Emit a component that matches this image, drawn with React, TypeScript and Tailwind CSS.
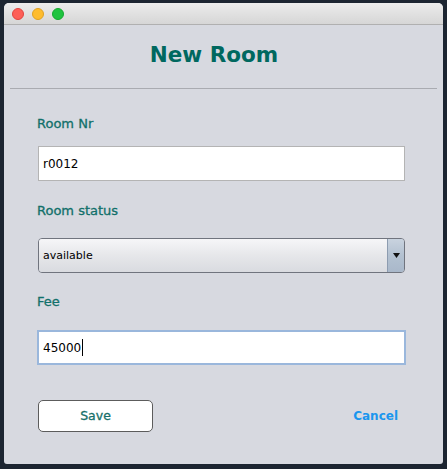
const font = { fontFamily: '"DejaVu Sans", "Liberation Sans", sans-serif' };

function TrafficLights() {
  return (
    <div className="flex items-center gap-[8px] pl-[8px]">
      <span className="block w-[12px] h-[12px] rounded-full bg-[#fd5f57] border border-[#e0443e]" />
      <span className="block w-[12px] h-[12px] rounded-full bg-[#febc2e] border border-[#dea123]" />
      <span className="block w-[12px] h-[12px] rounded-full bg-[#1fc33f] border border-[#14a92f]" />
    </div>
  );
}

function Label({ children, className = "" }: { children: string; className?: string }) {
  return (
    <div
      className={`h-[16px] leading-[16px] text-[13px] text-[#11706a] [-webkit-text-stroke:0.3px_#11706a] ${className}`}
    >
      {children}
    </div>
  );
}

export default function App() {
  return (
    <div className="w-[447px] h-[469px] bg-[#1c2531] pt-[3px] pl-[4px]" style={font}>
      <div className="w-[439px] h-[461px] rounded-t-[5px] rounded-b-[3px] overflow-hidden bg-[#d7d9e0] flex flex-col">
        {/* title bar */}
        <div className="h-[22px] shrink-0 flex items-center bg-gradient-to-b from-[#ececec] to-[#d6d6d6] border-b border-[#b0b0b0]">
          <TrafficLights />
        </div>

        <div className="mt-[17px] h-[26px] leading-[26px] text-center pr-[19px] text-[21.5px] font-bold text-[#00685f]">
          New Room
        </div>

        <div className="mt-[20px] mx-[6px] h-px bg-[#a9abb1]" />

        <div className="flex flex-col pl-[33px]">
          <Label className="mt-[27px]">Room Nr</Label>
          <div className="mt-[14px] ml-px w-[367px] h-[35px] bg-white border border-[#b4b4b4] flex items-center pl-[4px] text-[12px] leading-[14px] text-black">
            r0012
          </div>

          <Label className="mt-[22px]">Room status</Label>
          <div className="mt-[19px] ml-px w-[367px] h-[35px] rounded-[4px] border border-[#70747e] flex overflow-hidden">
            <div className="flex-1 flex items-center pl-[4px] text-[11px] leading-[14px] text-black bg-gradient-to-b from-[#f6f6f8] via-[#e6e7ea] to-[#d9dbe0]">
              available
            </div>
            <div className="w-[17px] border-l border-[#8d9cb0] flex items-center justify-center bg-gradient-to-b from-[#c9d3df] via-[#b3c1d1] to-[#a9b8ca]">
              <svg width="7" height="5" viewBox="0 0 7 5">
                <path d="M0 0 L7 0 L3.5 5 Z" fill="#111" />
              </svg>
            </div>
          </div>

          <Label className="mt-[21px]">Fee</Label>
          <div className="mt-[20px] w-[369px] h-[35px] bg-white border-2 border-[#9ab7dc] flex items-center pl-[4px] text-[12px] leading-[14px] text-black">
            45000
            <span className="block w-px h-[17px] bg-black ml-px" />
          </div>
        </div>

        <div className="mt-[35px] flex items-center justify-between pl-[34px] pr-[45px]">
          <button className="w-[115px] h-[32px] bg-white border border-[#5c5c5c] rounded-[5px] text-[12.5px] text-[#17706a] [-webkit-text-stroke:0.3px_#17706a]">
            Save
          </button>
          <span className="text-[12px] font-bold text-[#1a96ee]">Cancel</span>
        </div>
      </div>
    </div>
  );
}
